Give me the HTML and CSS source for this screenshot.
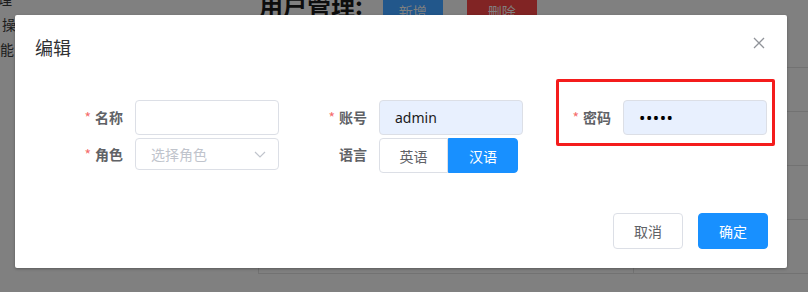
FILE: index.html
```html
<!DOCTYPE html>
<html>
<head>
    <title>用户管理</title>
    <link rel="stylesheet" href="styles.css">
</head>
<body>

    <!-- page behind the dialog (already dimmed by the mask) -->
    <div class="page">
        <div class="side">
            <div class="menu-item m1">管理</div>
            <div class="menu-item m2">操作</div>
            <div class="menu-item m3">功能</div>
        </div>
        <div class="main">
            <div class="toolbar">
                <h2>用户管理:</h2>
                <button class="bg-btn blue">新增</button>
                <button class="bg-btn red">删除</button>
            </div>
            <div class="table">
                <div class="tr head"><div class="td c1"></div><div class="td"></div></div>
                <div class="tr"><div class="td c1"></div><div class="td"></div></div>
                <div class="tr"><div class="td c1"></div><div class="td"></div></div>
                <div class="tr"><div class="td c1"></div><div class="td"></div></div>
            </div>
        </div>
    </div>

    <div class="dialog">
        <div class="dialog-header">
            <span class="dialog-title">编辑</span>
            <button class="close-btn" type="button">
                <svg width="12" height="12" viewBox="0 0 12 12"><path d="M1 1 L11 11 M11 1 L1 11" stroke="#909399" stroke-width="1.3" fill="none"/></svg>
            </button>
        </div>

        <div class="dialog-body">
            <form class="form">
                <div class="col">
                    <div class="item">
                        <label class="label"><span class="req">*</span>名称</label>
                        <input class="input" type="text">
                    </div>
                    <div class="item">
                        <label class="label short"><span class="req">*</span>角色</label>
                        <div class="select">
                            <span class="placeholder">选择角色</span>
                            <svg width="12" height="7" viewBox="0 0 12 7"><path d="M1 1 L6 6 L11 1" stroke="#c0c4cc" stroke-width="1.2" fill="none"/></svg>
                        </div>
                    </div>
                </div>
                <div class="col">
                    <div class="item">
                        <label class="label"><span class="req">*</span>账号</label>
                        <input class="input filled" type="text" value="admin">
                    </div>
                    <div class="item">
                        <label class="label short">语言</label>
                        <div class="radio-group">
                            <span class="radio-btn">英语</span>
                            <span class="radio-btn active">汉语</span>
                        </div>
                    </div>
                </div>
                <div class="col">
                    <div class="item">
                        <label class="label"><span class="req">*</span>密码</label>
                        <input class="input filled pwd" type="password" value="admin">
                    </div>
                </div>
            </form>
        </div>

        <div class="dialog-footer">
            <button class="btn" type="button">取消</button>
            <button class="btn primary" type="button">确定</button>
        </div>

        <div class="mark"></div>
    </div>

</body>
</html>
```

FILE: styles.css
```css
body {
    margin: 0;
    background: #808080;
    font-family: "Noto Sans CJK SC", "Noto Sans", sans-serif;
    overflow: hidden;
    height: 292px;
}

/* background page */
.page {
    display: flex;
}
.side {
    width: 258px;
    margin-top: -13px;
    color: #1c1c1c;
    font-size: 14px;
}
.menu-item {
    line-height: 25px;
    white-space: nowrap;
}
.m1 { margin-left: -16px; }
.m2 { margin-left: 2px; }
.m3 { margin-left: -14px; }

.main {
    flex: 1;
}
.toolbar {
    display: flex;
    align-items: flex-start;
    height: 30px;
}
.toolbar h2 {
    margin: -7px 0 0 1px;
    font-size: 24px;
    line-height: 24px;
    color: #0d0d0d;
    font-weight: 700;
}
.bg-btn {
    margin-top: -9px;
    height: 40px;
    border: none;
    font-family: inherit;
    font-size: 14px;
    color: #808080;
}
.bg-btn.blue {
    margin-left: 20px;
    width: 60px;
    background: #22578b;
}
.bg-btn.red {
    margin-left: 24px;
    width: 70px;
    background: #812424;
}
.table {
    margin-top: 37px;
    border-top: 1px solid #727272;
    border-left: 1px solid #727272;
}
.tr {
    display: flex;
    height: 53px;
    border-bottom: 1px solid #727272;
}
.tr.head {
    height: 43px;
}
.td.c1 {
    width: 374px;
    border-right: 1px solid #727272;
}

/* dialog */
.dialog {
    position: absolute;
    top: 15px;
    left: 15px;
    width: 772px;
    height: 253px;
    background: #fff;
    border-radius: 2px;
    box-shadow: 0 1px 3px rgba(0, 0, 0, 0.3);
}
.dialog-header {
    padding: 20px 20px 10px;
    position: relative;
}
.dialog-title {
    font-size: 18px;
    line-height: 24px;
    color: #303133;
}
.close-btn {
    position: absolute;
    top: 22px;
    right: 22px;
    padding: 0;
    border: none;
    background: transparent;
    width: 12px;
    height: 12px;
    cursor: pointer;
}
.close-btn svg {
    display: block;
}

.dialog-body {
    padding: 30px 20px;
}
.form {
    display: flex;
    margin: 0;
}
.col {
    width: 244px;
    display: flex;
    flex-direction: column;
    gap: 3px;
}
.item {
    display: flex;
    align-items: flex-start;
}
.label {
    width: 100px;
    box-sizing: border-box;
    padding-right: 12px;
    text-align: right;
    font-size: 14px;
    font-weight: 700;
    color: #606266;
    line-height: 35px;
}
.label.short {
    line-height: 32px;
}
.req {
    color: #f56c6c;
    margin-right: 4px;
    font-weight: 400;
}
.input {
    width: 144px;
    height: 35px;
    box-sizing: border-box;
    border: 1px solid #dcdfe6;
    border-radius: 4px;
    padding: 0 15px;
    font-family: "Noto Sans", sans-serif;
    font-size: 14px;
    color: #1a1a1a;
    outline: none;
    background: #fff;
}
.input.filled {
    background: #e8f0fe;
}
.input.pwd {
    font-size: 17px;
    letter-spacing: 0.5px;
    color: #000;
}
.select {
    width: 144px;
    height: 32px;
    box-sizing: border-box;
    border: 1px solid #dcdfe6;
    border-radius: 4px;
    padding: 0 12px 0 15px;
    display: flex;
    align-items: center;
    justify-content: space-between;
}
.placeholder {
    font-size: 14px;
    color: #c0c4cc;
}
.radio-group {
    display: flex;
    height: 35px;
}
.radio-btn {
    width: 69px;
    box-sizing: border-box;
    display: flex;
    align-items: center;
    justify-content: center;
    font-size: 14px;
    color: #606266;
    border: 1px solid #dcdfe6;
    border-radius: 4px 0 0 4px;
}
.radio-btn.active {
    width: 70px;
    background: #1890ff;
    border-color: #1890ff;
    color: #fff;
    border-radius: 0 4px 4px 0;
}

.dialog-footer {
    padding: 10px 19px 20px 20px;
    display: flex;
    justify-content: flex-end;
    gap: 15px;
}
.btn {
    width: 70px;
    height: 36px;
    border: 1px solid #dcdfe6;
    border-radius: 4px;
    background: #fff;
    font-family: inherit;
    font-size: 14px;
    color: #606266;
    cursor: pointer;
}
.btn.primary {
    background: #1890ff;
    border-color: #1890ff;
    color: #fff;
}

/* red annotation frame around the password field */
.mark {
    position: absolute;
    left: 541px;
    top: 64px;
    width: 219px;
    height: 67px;
    box-sizing: border-box;
    border: 3px solid #f41c1c;
    border-radius: 2px;
}
```
